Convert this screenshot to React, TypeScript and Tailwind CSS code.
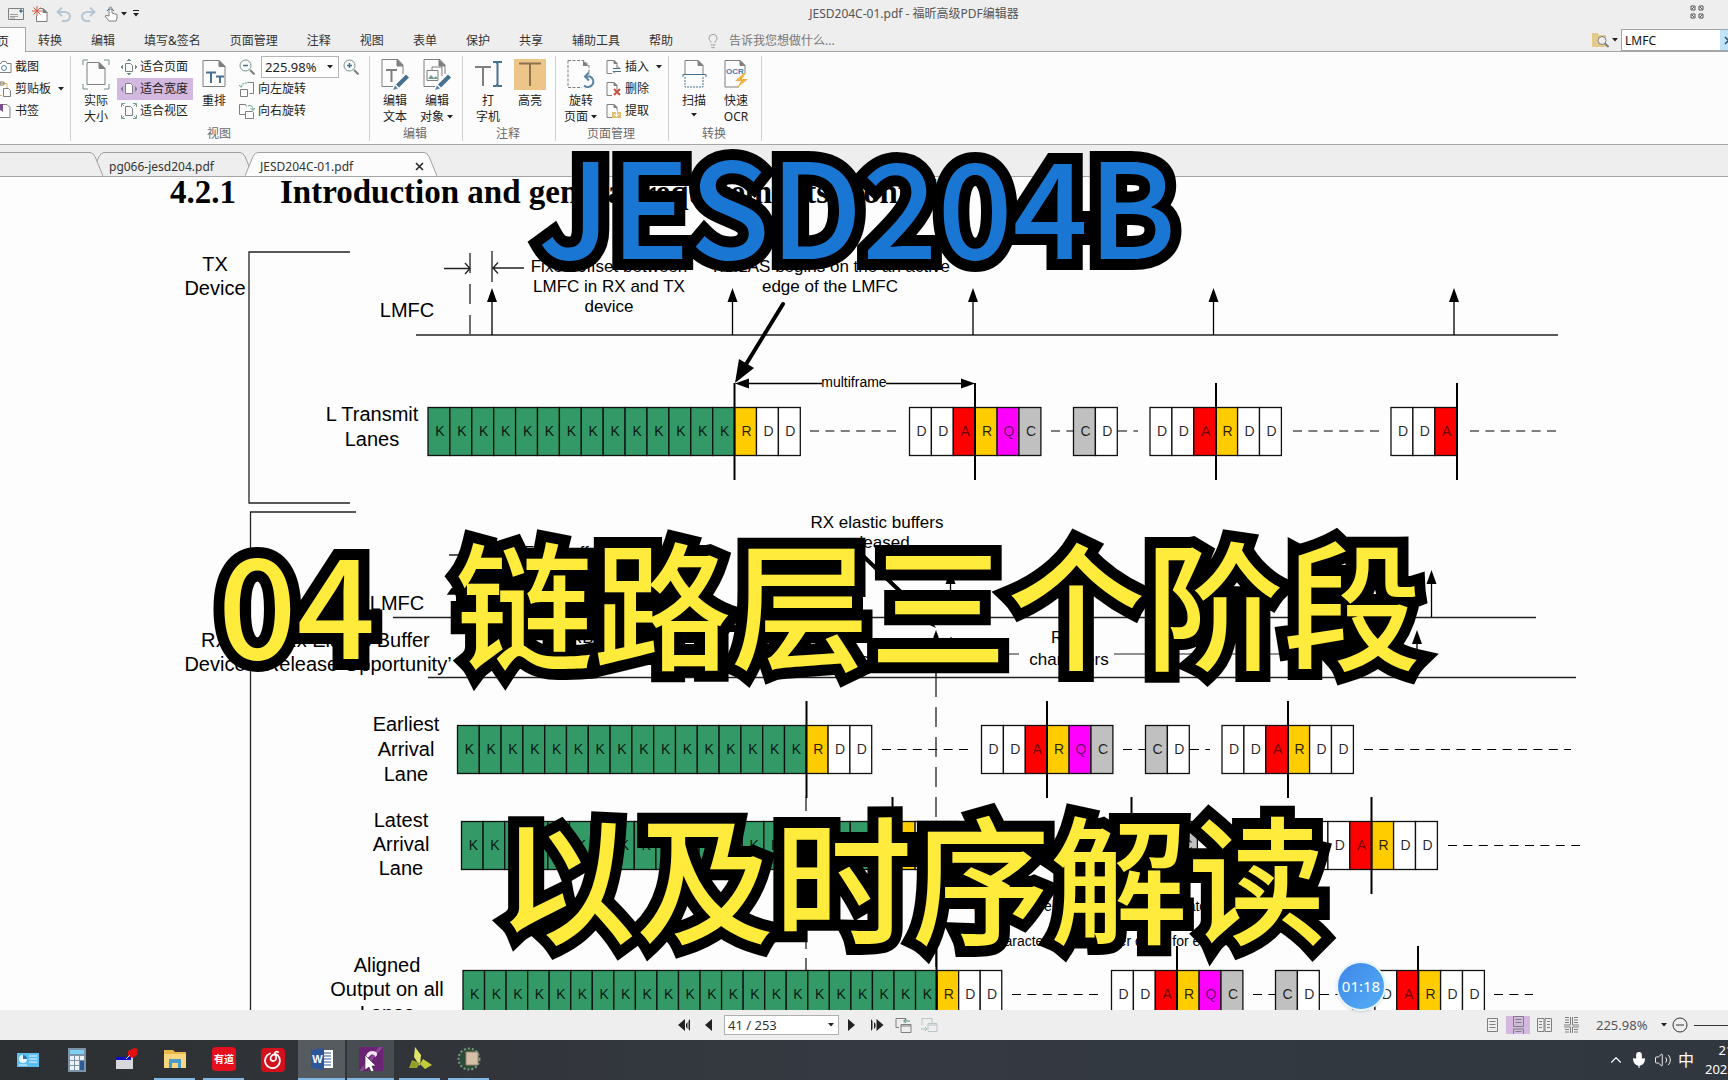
import type { ReactNode } from "react"
import { ChevronUp, Lightbulb, Mic, Volume2 } from "lucide-react"

const menuTabs = ["转换", "编辑", "填写&签名", "页面管理", "注释", "视图", "表单", "保护", "共享", "辅助工具", "帮助"]

const cellFill: Record<string, string> = {
  K: "#339966",
  R: "#ffcc00",
  D: "#ffffff",
  A: "#ff0000",
  Q: "#ff00ff",
  C: "#c0c0c0",
}

/* ---------- small shared pieces ---------- */

function Caret() {
  return (
    <svg width="7" height="4" viewBox="0 0 7 4" className="shrink-0">
      <path d="M0 0h6L3 3.5z" fill="#222" />
    </svg>
  )
}

function Icon({ w = 16, h = 16, children }: { w?: number; h?: number; children: ReactNode }) {
  return (
    <svg width={w} height={h} viewBox={`0 0 ${w} ${h}`} fill="none" stroke="#7f7f7f" className="shrink-0">
      {children}
    </svg>
  )
}

function RibbonGroup({ label, className, children }: { label: string; className: string; children: ReactNode }) {
  return (
    <section className={`flex h-[85px] shrink-0 flex-col border-r border-[#d0d0d0] ${className}`}>
      <div className="flex flex-1">{children}</div>
      <div className="h-4 pr-0.5 text-center leading-[18px] text-[#6a6a6a]">{label}</div>
    </section>
  )
}

function BigButton({ icon, lines, caret, className = "w-[42px]" }: { icon: ReactNode; lines: string[]; caret?: boolean; className?: string }) {
  return (
    <button className={`flex shrink-0 flex-col items-center pt-[3px] ${className}`}>
      <span className="flex h-[34px] items-start">{icon}</span>
      {lines.map((line, i) => (
        <span key={line} className="flex items-center gap-[3px] leading-4 whitespace-nowrap">
          {line}
          {caret && i === 1 && <Caret />}
        </span>
      ))}
    </button>
  )
}

function SmallButton({ icon, label, caret, active }: { icon: ReactNode; label: string; caret?: boolean; active?: boolean }) {
  return (
    <button className={`flex h-[22px] items-center gap-[3px] pr-[5px] pl-1 whitespace-nowrap ${active ? "bg-[#d3b8e0]" : ""}`}>
      {icon}
      {label}
      {caret && (
        <span className="pl-1">
          <Caret />
        </span>
      )}
    </button>
  )
}

/* ---------- ribbon drawings ---------- */

const Pencil = () => (
  <g stroke="none">
    <path d="M15 25.500l10-10 3 3-10 10z" fill="#47718f" />
    <path d="M14 26.500l3 3-5 1.500z" fill="#5b86a5" />
  </g>
)

const ActualSize = () => (
  <Icon w={28} h={31}>
    <path d="M1 6V1h5M22 1h5v5M1 25v5h5M22 30h5v-5" stroke="#6f8f8a" />
    <path d="M5 3.500h12l6 6v16H5z" />
    <path d="M17 3.500v6h6z" fill="#7f7f7f" />
  </Icon>
)

const FitPage = () => (
  <Icon>
    <path d="M4.500 4.500h5l2 2v6h-7z" />
    <path d="M6 2l2-2 2 2M6 14l2 2 2-2M2 6L0 8l2 2M14 6l2 2-2 2" fill="#6f8f8a" stroke="#6f8f8a" />
  </Icon>
)

const FitWidth = () => (
  <Icon>
    <path d="M4.500 2.500h5l2 2v8h-7z" fill="#fff" />
    <path d="M2 5.500L0 8l2 2.500M14 5.500L16 8l-2 2.500" fill="#7c7c98" stroke="#7c7c98" />
  </Icon>
)

const FitVisible = () => (
  <Icon>
    <path d="M4.500 3.500h5l2 2v7h-7z" />
    <path d="M.5 4V.5H4M12 .5h3.500V4M.5 12v3.500H4M12 15.500h3.500V12M1 1l2 2M15 1l-2 2M1 15l2-2M15 15l-2-2" stroke="#6f9f95" />
  </Icon>
)

const Reflow = () => (
  <Icon w={24} h={30}>
    <path d="M1 1.500h16l6 6v20H1z" />
    <path d="M17 1.500v6h6z" fill="#7f7f7f" />
    <path d="M4 13.500h10M9 14v10M14 17.500h8M18 18v6" stroke="#47718f" strokeWidth="2" />
  </Icon>
)

const Zoom = ({ plus }: { plus?: boolean }) => (
  <Icon>
    <circle cx="6.500" cy="6.500" r="5.500" stroke="#6f8f8a" />
    <path d={plus ? "M4 6.500h5M6.500 4v5" : "M4 6.500h5"} stroke="#47718f" strokeWidth="1.500" />
    <path d="M11 11l4.500 4.500" strokeWidth="2" />
  </Icon>
)

const RotateIcon = ({ right }: { right?: boolean }) => (
  <Icon>
    {right ? (
      <>
        <path d="M6.500 11.500h-6v-10h6l1 2M6.500 15.500v-7h7l1 1v6z" />
        <path d="M9 3c3-1 5 0 5 4M11.500 5L14 7.500 15.800 5" stroke="#5f9f86" />
      </>
    ) : (
      <>
        <path d="M8.500 1.500h6v11h-4M1.500 8.500h7v7h-7z" />
        <path d="M8 2C4 2 2 3 2 6M0 4l2 2.500L4.500 4" stroke="#5f9f86" strokeDasharray="2 1" />
      </>
    )}
  </Icon>
)

const EditText = () => (
  <Icon w={29} h={31}>
    <path d="M22 15V6l-5-5.500H1v27h11" />
    <path d="M16 .5V7h6z" fill="#7f7f7f" />
    <path d="M5 11h11M10.500 11v12" strokeWidth="2" />
    <Pencil />
  </Icon>
)

const EditObject = () => (
  <Icon w={29} h={31}>
    <path d="M22 15V6l-5-5.500H1v27h11" />
    <path d="M16 .5V7h6z" fill="#7f7f7f" />
    <path d="M9 11V8h10v9M4 11.500h11v10H4z" />
    <path d="M5 20l3-4 3 3 2-2 2 3z" fill="#6f9f95" stroke="none" />
    <Pencil />
  </Icon>
)

const Typewriter = () => (
  <Icon w={29} h={30}>
    <path d="M1 8h16M9 8v19" strokeWidth="2" />
    <path d="M19 3h3l1 1 1-1h4M23.500 4v22M19 27h3l1-1 1 1h4" stroke="#47718f" strokeWidth="2" />
  </Icon>
)

const Highlight = () => (
  <Icon w={32} h={31}>
    <path d="M0 0h32v31H0z" fill="#edc588" stroke="none" />
    <path d="M5 4.500h22M16 4.500V27" stroke="#8b7350" strokeWidth="2" />
  </Icon>
)

const RotatePage = () => (
  <Icon w={29} h={31}>
    <path d="M1 1.500h16l5 5v9M1 1.500v27h14" strokeDasharray="3 1.500" />
    <path d="M16 1.500V7h6z" fill="#7f7f7f" stroke="none" />
    <path d="M18.500 17.500h4.500a5.500 5.500 0 1 1-6 9M22 13.500l-4 4 4 4" stroke="#5b86a5" strokeWidth="2" />
  </Icon>
)

const PageAction = ({ kind }: { kind: string }) => (
  <Icon>
    <path d="M6 14.500H1v-13h7l3 3V9" />
    <path d="M8 1.500v3h3z" fill="#7f7f7f" />
    {kind === "insert" && <path d="M7 9.500h7l-2-2M15 12.500H7l2 2" stroke="#47718f" />}
    {kind === "delete" && <path d="M8 8l6 6M14 8l-6 6" stroke="#c4523c" strokeWidth="2" />}
    {kind === "extract" && (
      <>
        <path d="M6 9h9v6H6z" fill="#dfc06e" stroke="none" />
        <path d="M10.500 7v6M8 11l2.500 2.500L13 11" stroke="#fff" />
      </>
    )}
  </Icon>
)

const Scan = () => (
  <Icon w={25} h={30}>
    <path d="M3 15V1.500h13l5 5V15" />
    <path d="M16 1.500v5h5z" fill="#7f7f7f" />
    <path d="M1 18v-2.500h23V18" stroke="#47718f" />
    <path d="M3 18v10h18V18" stroke="#47718f" strokeDasharray="2 1" />
  </Icon>
)

const QuickOcr = () => (
  <Icon w={25} h={31}>
    <path d="M1 1.500h15l5 5V14M1 1.500V28h14" />
    <path d="M16 1.500v5h5z" fill="#7f7f7f" />
    <text x="2" y="15" fontSize="8" fontWeight="700" fontFamily="Liberation Sans, sans-serif" fill="#4a78b0" stroke="none">
      OCR
    </text>
    <path d="M20 14l-9 8h6l-4 7 11-9h-6l4-6z" fill="#f0b13e" stroke="none" />
  </Icon>
)

/* ---------- top of the window ---------- */

function TitleBar() {
  return (
    <header className="grid h-[27px] grid-cols-[150px_1fr_50px] items-center">
      <div className="flex items-center gap-2 pl-2">
        <Icon>
          <path d="M.5 2.500h15v11H.5z" />
          <path d="M2 8.500h8M2 10.500h8M2 12h5" stroke="#9aa0a0" />
          <path d="M12 4h2v2h-2z" fill="#47718f" stroke="#47718f" />
        </Icon>
        <Icon>
          <path d="M7 2.500h4l4 4v9H4.500V10" fill="#fff" />
          <path d="M11 2.500v4h4z" fill="#7f7f7f" />
          <path d="M5 0v10M0 5h10M1.500 1.500l7 7M8.500 1.500l-7 7" stroke="#d0583f" />
        </Icon>
        <Icon>
          <path d="M2 6h7a5 4.500 0 1 1 0 9H6M6 1.500L1.500 6 6 10" stroke="#b7c6d4" strokeWidth="2" />
        </Icon>
        <Icon>
          <path d="M14 6H7a5 4.500 0 1 0 0 9h3M10 1.500L14.500 6 10 10" stroke="#b7c6d4" strokeWidth="2" />
        </Icon>
        <Icon w={16}>
          <path d="M5 10V2.500a1.500 1.500 0 0 1 3 0V7l5 1.500V12l-1 3H5l-4-5 2-.5z" fill="#fff" />
          <path d="M3 5a4 4 0 0 1 7 0" stroke="#47718f" />
        </Icon>
        <div className="-ml-[7px] flex items-center gap-[5px]">
          <Caret />
          <svg width="7" height="7" viewBox="0 0 7 7">
            <path d="M0 .5h6" stroke="#222" />
            <path d="M0 3h6L3 6.500z" fill="#222" />
          </svg>
        </div>
      </div>
      <h1 className="text-center text-[#555]">JESD204C-01.pdf - 福昕高级PDF编辑器</h1>
      <button aria-label="全屏" className="pb-1 pl-3">
        <svg width="14" height="14" viewBox="0 0 14 14" fill="none" stroke="#555">
          <path d="M1 1h4v4H1zM9 1h4v4H9zM1 9h4v4H1zM9 9h4v4H9zM2 4l2-2M12 4l-2-2M2 10l2 2M12 10l-2 2" />
        </svg>
      </button>
    </header>
  )
}

function MenuBar() {
  return (
    <nav className="flex h-[25px] items-center border-b border-[#a5a5a5]">
      <button className="-mb-px flex h-[25px] w-[26px] shrink-0 items-center justify-end self-start border-t border-r border-[#a5a5a5] bg-[#fcfcfc] pt-1 pr-4 whitespace-nowrap">
        主页
      </button>
      <div className="flex items-center gap-[29px] pt-1 pl-3 text-[#333]">
        {menuTabs.map((tab) => (
          <button key={tab} className="whitespace-nowrap">
            {tab}
          </button>
        ))}
      </div>
      <label className="flex items-center gap-2 pt-1 pl-8 text-[#777]">
        <Lightbulb size={16} strokeWidth={1} />
        <input placeholder="告诉我您想做什么..." className="w-40 bg-transparent outline-none placeholder:text-[#777]" />
      </label>
      <div className="ml-auto flex items-center pt-0.5">
        <Icon w={17}>
          <path d="M0 1h6l1 2h7v12H0z" fill="#e3c98c" stroke="none" />
          <circle cx="10" cy="8.500" r="4" fill="#eee" />
          <path d="M13 11.500l3.500 3.500" strokeWidth="2" />
        </Icon>
        <div className="pr-0.5 pl-[3px]">
          <Caret />
        </div>
        <input aria-label="查找" defaultValue="LMFC" className="h-[22px] w-[99px] border border-r-0 border-[#a5a5a5] bg-white px-[3px] text-[#111] outline-none" />
        <button aria-label="清除" className="h-[22px] w-2 overflow-hidden border-t border-b border-[#a5a5a5] bg-[#bfe3f7] pl-1">
          <svg width="9" height="9" viewBox="0 0 9 9" stroke="#1f4f70" strokeWidth="1.500">
            <path d="M1 1l7 7M8 1L1 8" />
          </svg>
        </button>
      </div>
    </nav>
  )
}

function Ribbon() {
  return (
    <div className="flex h-[93px] border-b border-[#a5a5a5] bg-[#fcfcfc] pt-1">
      <RibbonGroup label="" className="w-[71px]">
        <div className="-ml-2 flex flex-col items-start">
          <SmallButton
            label="截图"
            icon={
              <Icon>
                <path d="M1 4.500h4l1-2h4l1 2h4v9H1z" />
                <circle cx="8" cy="9" r="2.500" stroke="#5b86a5" />
              </Icon>
            }
          />
          <SmallButton
            caret
            label="剪贴板"
            icon={
              <Icon>
                <path d="M1 2.500h10v5M1 2.500v12h5" stroke="#dfb35c" />
                <path d="M4 1h4v3H4zM7.500 7.500h5l2 2v6h-7z" />
              </Icon>
            }
          />
          <SmallButton
            label="书签"
            icon={
              <Icon>
                <path d="M3 1.500h8l3 3v10H3z" />
                <path d="M2 1h5v8L4.500 7 2 9z" fill="#77508c" stroke="none" />
              </Icon>
            }
          />
        </div>
      </RibbonGroup>

      <RibbonGroup label="视图" className="w-[299px]">
        <BigButton className="ml-1 w-[42px]" icon={<ActualSize />} lines={["实际", "大小"]} />
        <div className="flex flex-col items-start">
          <SmallButton icon={<FitPage />} label="适合页面" />
          <SmallButton icon={<FitWidth />} label="适合宽度" active />
          <SmallButton icon={<FitVisible />} label="适合视区" />
        </div>
        <BigButton icon={<Reflow />} lines={["重排"]} />
        <div className="flex flex-col items-start">
          <div className="flex h-[22px] items-center pl-1">
            <Zoom />
            <label className="ml-[6px] flex h-[22px] w-[78px] items-center border border-[#b5b5b5] bg-white pr-1 pl-[3px]">
              <input aria-label="缩放" defaultValue="225.98%" className="w-full min-w-0 text-[13px] outline-none" />
              <Caret />
            </label>
            <span className="pl-1">
              <Zoom plus />
            </span>
          </div>
          <SmallButton icon={<RotateIcon />} label="向左旋转" />
          <SmallButton icon={<RotateIcon right />} label="向右旋转" />
        </div>
      </RibbonGroup>

      <RibbonGroup label="编辑" className="w-[93px]">
        <BigButton className="ml-1 w-[42px]" icon={<EditText />} lines={["编辑", "文本"]} />
        <BigButton icon={<EditObject />} lines={["编辑", "对象"]} caret />
      </RibbonGroup>

      <RibbonGroup label="注释" className="w-[93px]">
        <BigButton className="ml-1 w-[42px]" icon={<Typewriter />} lines={["打", "字机"]} />
        <BigButton icon={<Highlight />} lines={["高亮"]} />
      </RibbonGroup>

      <RibbonGroup label="页面管理" className="w-[113px]">
        <BigButton className="ml-1 w-[42px]" icon={<RotatePage />} lines={["旋转", "页面"]} caret />
        <div className="flex flex-col items-start">
          <SmallButton icon={<PageAction kind="insert" />} label="插入" caret />
          <SmallButton icon={<PageAction kind="delete" />} label="删除" />
          <SmallButton icon={<PageAction kind="extract" />} label="提取" />
        </div>
      </RibbonGroup>

      <RibbonGroup label="转换" className="w-[93px]">
        <div className="flex flex-col items-center">
          <BigButton className="ml-1 w-[42px]" icon={<Scan />} lines={["扫描"]} />
          <span className="pt-1 pl-1">
            <Caret />
          </span>
        </div>
        <BigButton icon={<QuickOcr />} lines={["快速", "OCR"]} />
      </RibbonGroup>
    </div>
  )
}

function TabEdge({ flip, active }: { flip?: boolean; active?: boolean }) {
  return (
    <svg width="13" height="24" viewBox="0 0 13 24" fill={active ? "#fcfcfc" : "#eeeeee"} stroke="#a0a0a0" className="shrink-0">
      <path d={flip ? "M0 .5q3 0 5 4L13 24H0" : "M13 .5q-3 0-5 4L0 24h13"} stroke="none" />
      <path d={flip ? "M0 .5q3 0 5 4L13 24" : "M13 .5q-3 0-5 4L0 24"} fill="none" />
    </svg>
  )
}

function DocumentTabs() {
  return (
    <div className="flex h-8 items-end border-b border-[#a5a5a5] text-[#333]">
      <div className="z-10 flex">
        <div className="h-6 w-[90px] border-t border-[#a0a0a0]" />
        <TabEdge flip />
      </div>
      <div className="-ml-3 flex">
        <TabEdge />
        <button className="h-6 w-[136px] border-t border-[#a0a0a0] pt-1 pl-[5px] text-left">pg066-jesd204.pdf</button>
        <TabEdge flip />
      </div>
      <div className="z-10 -ml-2 flex">
        <TabEdge active />
        <div className="flex h-6 w-[166px] items-center justify-between border-t border-[#a0a0a0] bg-[#fcfcfc] pt-1 pl-0.5">
          <button>JESD204C-01.pdf</button>
          <button aria-label="关闭">
            <svg width="9" height="9" viewBox="0 0 9 9" stroke="#222" strokeWidth="1.500">
              <path d="M1 1l7 7M8 1L1 8" />
            </svg>
          </button>
        </div>
        <TabEdge flip active />
      </div>
    </div>
  )
}

/* ---------- timing diagram ---------- */

function Cells({ x, y, text, w = 21.900 }: { x: number; y: number; text: string; w?: number }) {
  return (
    <g>
      {text.split("").map((c, i) => (
        <g key={i}>
          <rect x={x + i * w} y={y} width={w} height="48" fill={cellFill[c]} stroke="#111" strokeWidth="1.300" />
          <text x={x + (i + 0.5) * w + 1} y={y + 28} fontSize="14" textAnchor="middle" fillOpacity={c === "A" || c === "Q" ? 0.6 : 0.85}>
            {c}
          </text>
        </g>
      ))}
    </g>
  )
}

function Label({ x, y, lines, size = 20, step = 24 }: { x: number; y: number; lines: string[]; size?: number; step?: number }) {
  return (
    <text fontSize={size} textAnchor="middle">
      {lines.map((line, i) => (
        <tspan key={i} x={x} y={y + i * step}>
          {line}
        </tspan>
      ))}
    </text>
  )
}

function UpArrow({ x, y, h = 47 }: { x: number; y: number; h?: number }) {
  return (
    <g>
      <path d={`M${x} ${y}v${-h + 10}`} stroke="#000" strokeWidth="1.300" />
      <path d={`M${x} ${y - h}l5 14h-10z`} />
    </g>
  )
}

function Bar({ x, y, h = 97 }: { x: number; y: number; h?: number }) {
  return <path d={`M${x} ${y}v${h}`} stroke="#000" strokeWidth="2" />
}

function Dashes({ y, spans }: { y: number; spans: number[][] }) {
  return <path d={spans.map(([a, b]) => `M${a} ${y}H${b}`).join("")} stroke="#000" strokeWidth="1.200" strokeDasharray="9 6.400" />
}

function TimingDiagram() {
  return (
    <svg width="1728" height="833" viewBox="0 177 1728 833" className="block" fontFamily="Liberation Sans, Arial, sans-serif">
      <g fontFamily="Liberation Serif, serif" fontWeight="700" fontSize="33">
        <text x="170" y="203">4.2.1</text>
        <text x="280" y="203">Introduction and general requirements (cont’d)</text>
      </g>

      {/* transmitter */}
      <g fill="none" stroke="#222" strokeWidth="1.300">
        <path d="M350 252H249V503H350M356 512H250.500V1010" />
        <path d="M470 253V334" strokeDasharray="20 11" />
        <path d="M492 251V282M444 268.500H470M465 263l5 5.500-5 5.500M524 268H493M498 262.500l-5 5.500 5 5.500" />
        <path d="M416 335H1558" />
      </g>
      <Label x={215} y={271} lines={["TX", "Device"]} />
      <Label x={407} y={317} lines={["LMFC"]} />
      <Label x={609} y={272} size={17} step={20} lines={["Fixed offset between", "LMFC in RX and TX", "device"]} />
      <Label x={830} y={272} size={17} step={20} lines={["Tx ILAS begins on the an active", "edge of the LMFC"]} />
      {[492, 732.5, 973, 1213.5, 1454].map((x) => (
        <UpArrow key={x} x={x} y={335} />
      ))}
      <path d="M783 304L745 366" stroke="#000" strokeWidth="4" strokeLinecap="round" />
      <path d="M735 383l4-24 15 9z" />
      <path d="M740 383.500H822M886 383.500H970" stroke="#000" strokeWidth="1.300" />
      <path d="M735 383.500l14-5v10zM975 383.500l-14-5v10z" />
      <Label x={854} y={387} size={14} lines={["multiframe"]} />
      <Label x={372} y={421} step={25} lines={["L Transmit", "Lanes"]} />
      <Cells x={428} y={407.500} text="KKKKKKKKKKKKKKRDD" />
      <Cells x={909.500} y={407.500} text="DDARQC" />
      <Cells x={1073.500} y={407.500} text="CD" />
      <Cells x={1150} y={407.500} text="DDARDD" />
      <Cells x={1391} y={407.500} text="DDA" />
      <Dashes y={431} spans={[[810, 897], [1051, 1073], [1118, 1138], [1293, 1379], [1470, 1557]]} />
      {[734.5, 975, 1216, 1457].map((x) => (
        <Bar key={x} x={x} y={383} />
      ))}

      {/* receiver axes */}
      <g fill="none" stroke="#222" strokeWidth="1.300">
        <path d="M393 617.500H1536M428 677.500H1576" />
        <path d="M449 555H470M465 549.500l5 5.500-5 5.500M476 648.500l-5 5.500 5 5.500" />
        <path d="M470.500 537V608M470.500 636V670M951 637V645" />
        <path d="M471 654H540M632 654H786M872 654H1019M1114 654H1410" strokeWidth="1" />
        <path d="M936 677V970" strokeDasharray="20 10" />
        <path d="M806 797V970" strokeDasharray="14 9" />
      </g>
      <Label x={602} y={558} size={17} step={20} lines={["Fixed offset between", "LMFC in RX and TX", "device"]} />
      <Label x={877} y={528} size={17} step={20} lines={["RX elastic buffers", "released"]} />
      <Label x={397} y={610} lines={["LMFC"]} />
      <Label x={215} y={647} lines={["RX", "Device"]} />
      <Label x={356} y={647} lines={["Rx Elastic Buffer", "‘Release Opportunity’"]} />
      {[588, 829, 1069].map((x) => (
        <Label key={x} x={x} y={643} size={17} step={22} lines={["RBD", "characters"]} />
      ))}
      {[710, 950.5, 1191, 1431.5].map((x) => (
        <UpArrow key={x} x={x} y={617} />
      ))}
      {[936, 1417].map((x) => (
        <UpArrow key={x} x={x} y={677} />
      ))}
      <path d="M860 553L926 616" stroke="#000" strokeWidth="4" strokeLinecap="round" />
      <path d="M936 628l-23-11 10-9z" />

      {/* earliest lane */}
      <Label x={406} y={731} lines={["Earliest", "Arrival", "Lane"]} step={25} />
      <Cells x={457.500} y={725.500} text="KKKKKKKKKKKKKKKKRDD" w={21.800} />
      <Cells x={981.500} y={725.500} text="DDARQC" />
      <Cells x={1145.500} y={725.500} text="CD" />
      <Cells x={1222} y={725.500} text="DDARDD" />
      <Dashes y={749.500} spans={[[882, 970], [1123, 1145], [1190, 1210], [1364, 1571]]} />
      {[806.5, 1047, 1288].map((x) => (
        <Bar key={x} x={x} y={701} />
      ))}

      {/* latest lane */}
      <Label x={401} y={827} lines={["Latest", "Arrival", "Lane"]} step={24} />
      <Cells x={461.500} y={821.500} text="KKKKKKKKKKKKKKKKKKKKRDD" w={21.600} />
      <Cells x={1066} y={821.500} text="DDARQC" />
      <Cells x={1306} y={821.500} text="DDARDD" />
      <Dashes y={845.500} spans={[[968, 1054], [1448, 1580]]} />
      {[892.5, 1131.5, 1371.5].map((x) => (
        <Bar key={x} x={x} y={797} />
      ))}
      <path d="M765 941.500H806M870 905.500H892M887 900l5 5.500-5 5.500M892.500 894V930" fill="none" stroke="#222" />
      <text x="970" y="911" fontSize="14">4 character elastic buffer delay for latest</text>
      <text x="978" y="946" fontSize="14">8 character elastic buffer delay for earliest</text>

      {/* aligned output */}
      <Label x={387} y={972} lines={["Aligned", "Output on all", "Lanes"]} />
      <Cells x={463} y={970.500} text="KKKKKKKKKKKKKKKKKKKKKKRDD" w={21.550} />
      <Cells x={1111.500} y={970.500} text="DDARQC" />
      <Cells x={1275.500} y={970.500} text="CD" />
      <Cells x={1353} y={970.500} text="DDARDD" />
      <Dashes y={994.500} spans={[[1012, 1099], [1253, 1275], [1320, 1341], [1494, 1533]]} />
      {[936.5, 1177, 1418].map((x) => (
        <Bar key={x} x={x} y={946} />
      ))}
    </svg>
  )
}

/* ---------- bottom of the window ---------- */

function StatusBar() {
  return (
    <div className="grid h-[30px] grid-cols-[678fr_260px_790fr] items-center text-[#333]">
      <div />
      <div className="flex items-center">
        <button aria-label="首页" className="w-[20px]">
          <svg width="13" height="14" viewBox="0 0 13 14" fill="#222">
            <path d="M7 1v12L0 7zM8 6l1.500-2v7L8 9zM10.500 3L12 1v12l-1.500-2z" />
          </svg>
        </button>
        <button aria-label="上一页" className="w-[26px] pl-[7px]">
          <svg width="8" height="14" viewBox="0 0 8 14" fill="#222">
            <path d="M7 1v12L0 7z" />
          </svg>
        </button>
        <label className="flex h-5 w-[115px] items-center border border-[#b0b0b0] bg-white pr-[3px] pl-[3px]">
          <input aria-label="页码" defaultValue="41 / 253" className="w-full min-w-0 text-[13px] outline-none" />
          <Caret />
        </label>
        <button aria-label="下一页" className="w-[22px] pl-[9px]">
          <svg width="8" height="14" viewBox="0 0 8 14" fill="#222">
            <path d="M0 1v12l7-6z" />
          </svg>
        </button>
        <button aria-label="末页" className="w-[30px] pl-[10px]">
          <svg width="13" height="14" viewBox="0 0 13 14" fill="#222">
            <path d="M5.500 1v12l7-6zM4.500 6L3 4v7l1.500-2zM1.500 3L0 1v12l1.500-2z" />
          </svg>
        </button>
        <div className="flex gap-[9px] pl-1">
          <Icon w={17}>
            <path d="M4 10.500H1v-9h10v2M6 15.500v-8h10v8zM6 9h10" />
            <path d="M15 4H9M11 2L8.500 4 11 6" stroke="#4f8f7a" />
          </Icon>
          <Icon w={17}>
            <path d="M1 8V1.500h10v5M7 13.500v-7h9v8H7M7 8h9" stroke="#b9c4c4" />
            <path d="M0 12h6M4 10l2 2-2 2" stroke="#9fc0b4" />
          </Icon>
        </div>
      </div>
      <div className="flex min-w-0 items-center justify-end">
        <button aria-label="单页" className="flex w-[27px] justify-center">
          <Icon w={11} h={14}>
            <path d="M.5.5h10v13H.5zM2.500 3.500h6M2.500 6.500h6M2.500 9.500h6" />
          </Icon>
        </button>
        <button aria-label="连续" className="flex h-[18px] w-6 items-center justify-center bg-[#d3b8e0]">
          <Icon w={11} h={18}>
            <path d="M.5.500v10h10V.5zM2.500 3.500h6M2.500 6.500h6M.5 18v-5h10v5M2.500 15.500h6" />
          </Icon>
        </button>
        <button aria-label="双页" className="flex w-[29px] justify-center">
          <Icon w={15} h={14}>
            <path d="M.5.500h6.500v13H.5zM8 .5h6.500v13H8zM2 3.500h3M2 6.500h3M2 9.500h3M10 3.500h3M10 6.500h3M10 9.500h3" />
          </Icon>
        </button>
        <button aria-label="双页连续" className="flex w-[25px] justify-center">
          <Icon w={15} h={16}>
            <path d="M6.500 0v8H0M8.500 0v8H15M6.500 16v-6H0M8.500 16v-6H15M1 .5h4M1 3h4M1 5.500h4M10 .5h4M10 3h4M10 5.500h4M1 12.500h4M10 12.500h4M1 15h4M10 15h4" />
          </Icon>
        </button>
        <span className="w-[77px] pl-3 text-[13px] text-[#555]">225.98%</span>
        <Caret />
        <button aria-label="缩小" className="pl-1">
          <svg width="16" height="16" viewBox="0 0 16 16" fill="none" stroke="#333">
            <circle cx="8" cy="8" r="7" />
            <path d="M4 8h8" />
          </svg>
        </button>
        <input type="range" aria-label="缩放比例" className="ml-1.5 h-px w-[34px] appearance-none bg-[#333] [&::-webkit-slider-thumb]:appearance-none" />
      </div>
    </div>
  )
}

const taskApps: { name: string; state: string; icon: ReactNode }[] = [
  {
    name: "系统信息",
    state: "",
    icon: (
      <>
        <path d="M1 5h22v14H1z" fill="#5bbdf0" />
        <circle cx="7" cy="11" r="4" fill="#eaf7ff" />
        <path d="M7 11V7a4 4 0 0 1 4 4z" fill="#2474b8" />
        <path d="M13 8h8M13 11h8M13 14h8M3 17h8" stroke="#eaf7ff" />
      </>
    ),
  },
  {
    name: "计算器",
    state: "",
    icon: (
      <>
        <path d="M3 0h18v24H3z" fill="#7d93a8" />
        <path d="M5 2h14v4H5z" fill="#7fd0f0" />
        <path d="M5 8h4v4H5zM10 8h4v4h-4zM15 8h4v4h-4zM5 13h4v4H5zM10 13h4v4h-4zM5 18h4v4H5zM10 18h4v4h-4z" fill="#eef2f5" />
        <path d="M15 13h4v9h-4z" fill="#2a5c99" />
      </>
    ),
  },
  {
    name: "标注工具",
    state: "",
    icon: (
      <>
        <path d="M2 9h17v12H2z" fill="#d6d6dc" />
        <path d="M2 9h15v3H2z" fill="#1010c0" />
        <path d="M14 3l6-3 4 1-1 6-4 3-5-2z" fill="#e01010" />
        <path d="M12 11l4-4" stroke="#ddd" />
      </>
    ),
  },
  {
    name: "资源管理器",
    state: "border-[#84b7e3]",
    icon: (
      <>
        <path d="M1 3h9l2 2h11v16H1z" fill="#e9b949" />
        <path d="M1 7h22v14H1z" fill="#f8d77e" />
        <path d="M6 12h12v9h-3v-5H9v5H6z" fill="#4a9bc9" />
      </>
    ),
  },
  {
    name: "有道",
    state: "border-[#84b7e3]",
    icon: (
      <>
        <rect width="24" height="24" rx="4" fill="#e60f1e" />
        <text x="12" y="16" textAnchor="middle" fontSize="10" fontWeight="700" fontFamily="Noto Sans CJK SC, sans-serif" fill="#fff">
          有道
        </text>
      </>
    ),
  },
  {
    name: "网易云音乐",
    state: "",
    icon: (
      <>
        <rect width="24" height="24" rx="4" fill="#d3101c" />
        <path d="M9 5.500a7.500 7.500 0 1 0 8 2c-2-2-5-1.500-6.500.5s-1.500 5 1.500 5 3.500-2 3-4.500L14 6c-.5-2 1-3 3-2" fill="none" stroke="#fff" strokeWidth="1.800" strokeLinecap="round" />
      </>
    ),
  },
  {
    name: "Word",
    state: "border-[#84b7e3] bg-[#565b5f]",
    icon: (
      <>
        <path d="M12 3h11v18H12z" fill="#fff" />
        <path d="M14 6h7M14 9h7M14 12h7M14 15h7M14 18h7" stroke="#2b579a" />
        <path d="M1 3l13-2v22L1 21z" fill="#2b579a" />
        <text x="7.500" y="16" textAnchor="middle" fontSize="11" fontWeight="700" fontFamily="Liberation Sans, sans-serif" fill="#fff">
          W
        </text>
      </>
    ),
  },
  {
    name: "福昕",
    state: "border-[#84b7e3] bg-[#484d51]",
    icon: (
      <>
        <path d="M0 0h24v24H0z" fill="#6c2375" />
        <path d="M0 24L20 0h4L4 24z" fill="#8b4694" />
        <path d="M7 12c-1-6 5-10 10-7 2 2 1 4-1 5 0-3-4-3-5-1z" fill="#f3e6f5" />
        <path d="M6 8v15l4-3 2 5 3-1-2-5h4z" fill="#fff" stroke="#222" strokeWidth="0.600" />
      </>
    ),
  },
  {
    name: "Vivado",
    state: "border-[#84b7e3]",
    icon: (
      <>
        <path d="M7 0l6 8-1 11-6-9z" fill="#dfe46a" />
        <path d="M12 17l3-5 9 6-7 4z" fill="#c5cc3c" />
        <path d="M1 21l3-8 8 3-3 5z" fill="#98a02c" />
      </>
    ),
  },
  {
    name: "电路板",
    state: "border-[#84b7e3]",
    icon: (
      <>
        <circle cx="12" cy="12" r="10.500" fill="#2c4a38" stroke="#7d9c84" strokeWidth="2" strokeDasharray="2 2" />
        <path d="M9 5h12v13H9z" fill="#d6bfa8" stroke="#9a8673" />
      </>
    ),
  },
]

function Taskbar() {
  return (
    <footer className="flex h-10 bg-linear-to-r from-[#2d3032] via-[#353a42] to-[#30373f] pl-[3px] text-white">
      {taskApps.map((app) => (
        <button key={app.name} aria-label={app.name} className={`flex w-[49px] items-center justify-center ${app.state.includes("bg-") ? "px-px" : "px-1"}`}>
          <span className={`flex h-full w-full items-center justify-center ${app.state} ${app.state ? "border-b-2" : ""}`}>
            <svg width="24" height="24" viewBox="0 0 24 24">
              {app.icon}
            </svg>
          </span>
        </button>
      ))}
      <div className="ml-auto flex items-center">
        <ChevronUp size={18} strokeWidth={1.5} />
        <Mic size={18} strokeWidth={1.5} fill="white" className="ml-[5px]" />
        <Volume2 size={18} strokeWidth={1.2} className="ml-[6px]" />
        <span className="ml-[6px] text-[16px]">中</span>
        <div className="ml-[11px] w-[23px] overflow-hidden">
          <div className="w-[60px] text-center text-[13px] leading-[19px] whitespace-nowrap">
            21:18
            <br />
            2023/3/12
          </div>
        </div>
      </div>
    </footer>
  )
}

export default function App() {
  return (
    <div className="relative flex h-screen flex-col overflow-hidden bg-[#eeeeee] font-['Noto_Sans','Noto_Sans_CJK_SC',sans-serif] text-[12px] leading-4 text-[#222]">
      <TitleBar />
      <MenuBar />
      <Ribbon />
      <DocumentTabs />
      <main className="min-h-0 flex-1 overflow-hidden bg-[#fdfdfd]">
        <TimingDiagram />
      </main>
      <StatusBar />
      <Taskbar />

      {/* video captions over the window */}
      <div className="pointer-events-none absolute inset-0 z-20 font-['Noto_Sans_CJK_SC',sans-serif] text-[138px] leading-[138px] font-medium whitespace-nowrap text-[#ffeb3b] [-webkit-text-stroke:22px_black] [paint-order:stroke_fill]">
        <p className="absolute top-[133px] left-[538px] text-[132px] text-[#1976d2]">JESD204B</p>
        <p className="absolute top-[530px] left-[218px] flex gap-20">
          <span>04</span>
          <span>链路层三个阶段</span>
        </p>
        <p className="absolute top-[804px] left-[498px]">以及时序解读</p>
      </div>
      <div className="absolute top-[961px] left-[1336px] z-20 flex size-[50px] items-center justify-center rounded-full border-2 border-[#e6f4ff] bg-linear-to-br from-[#3f86e8] to-[#55aef5] text-[15px] text-white shadow">
        01:18
      </div>
    </div>
  )
}
